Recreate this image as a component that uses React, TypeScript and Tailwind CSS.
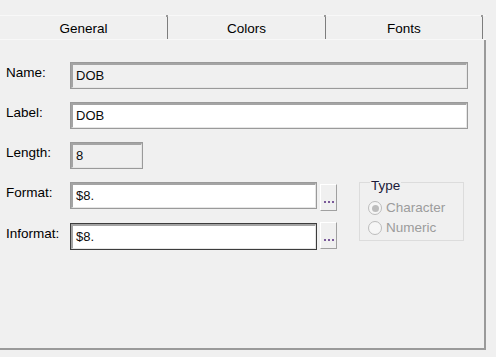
import type { ReactNode } from 'react';

const font = { fontFamily: '"Liberation Sans", Arial, sans-serif' };

function Field({ value, width, white, focused }: { value: string; width: string; white?: boolean; focused?: boolean }) {
  return (
    <div
      className={`${width} h-[27px] border ${focused ? 'border-[#3c3c3c]' : 'border-[#9a9a9a]'} ${white ? 'bg-white' : 'bg-[#f0f0f0]'}`}
    >
      <div className="flex h-full items-center border-t-2 border-l-2 border-r border-b border-t-[#a4a4a4] border-l-[#a4a4a4] border-r-[#e6e6e6] border-b-[#e6e6e6] pl-[3px] pb-[1px] text-[13px] text-[#0a0a0a]">
        {value}
      </div>
    </div>
  );
}

function DotsButton({ tall }: { tall?: boolean }) {
  return (
    <div
      className={`ml-[3px] ${tall ? 'mt-[2px]' : 'mt-[-1px]'} flex h-[27px] w-[17px] items-end justify-center gap-[2px] border border-t-white border-l-white border-r-[#a0a0a0] border-b-[#a0a0a0] bg-[#f0f0f0] pb-[7px]`}
    >
      <span className="h-[2px] w-[2px] bg-[#7a5a9a]" />
      <span className="h-[2px] w-[2px] bg-[#7a5a9a]" />
      <span className="h-[2px] w-[2px] bg-[#7a5a9a]" />
    </div>
  );
}

function Row({ label, children }: { label: string; children: ReactNode }) {
  return (
    <div className="flex items-start">
      <div className="w-[64px] pt-[3px] text-[13.5px] leading-[16px] text-black">{label}</div>
      {children}
    </div>
  );
}

function Radio({ label, checked }: { label: string; checked?: boolean }) {
  return (
    <div className="flex items-center gap-[4px]">
      <div className="flex h-[14px] w-[14px] items-center justify-center rounded-full border border-[#bcbcbc] bg-[#f6f6f6]">
        {checked ? <div className="h-[7px] w-[7px] rounded-full bg-[#bdbdbd]" /> : null}
      </div>
      <span className="text-[13.5px] leading-[16px] text-[#9c9c9c]">{label}</span>
    </div>
  );
}

function Tab({ label, width }: { label: string; width: string }) {
  return (
    <div className={`relative flex ${width} items-center justify-center border-r border-[#7d7d7d] pt-[3px]`}>
      {label}
      <span className="absolute right-[-1px] top-[-1px] h-[2px] w-[2px] bg-[#9a9a9a]" />
    </div>
  );
}

export default function App() {
  return (
    <div className="h-[357px] w-[496px] bg-[#f0f0f0] pt-[15px]" style={font}>
      <div className="flex h-[25px] w-[486px] border-t border-b border-[#f8f8f8] text-[13.5px] text-black">
        <Tab label="General" width="w-[168px]" />
        <Tab label="Colors" width="w-[158px]" />
        <Tab label="Fonts" width="w-[157px]" />
      </div>
      <div className="h-[310px] w-[486px] border-r-2 border-b-2 border-r-[#9a9a9a] border-b-[#9a9a9a] pl-[6px] pt-[22px]">
        <div className="flex flex-col gap-[13px]">
          <Row label="Name:">
            <Field value="DOB" width="w-[398px]" />
          </Row>
          <Row label="Label:">
            <Field value="DOB" width="w-[398px]" white />
          </Row>
          <Row label="Length:">
            <Field value="8" width="w-[73px]" />
          </Row>
          <div className="flex items-start">
            <div className="flex flex-col gap-[12px]">
              <Row label="Format:">
                <Field value="$8." width="w-[247px]" white />
                <DotsButton tall />
              </Row>
              <Row label="Informat:">
                <Field value="$8." width="w-[247px]" white focused />
                <DotsButton />
              </Row>
            </div>
            <div className="relative ml-[22px] h-[59px] w-[105px] border border-[#dcdcdc] pl-[8px] pt-[17px]">
              <span className="absolute left-[10px] top-[-5px] bg-[#f0f0f0] px-[1px] text-[13.5px] leading-[16px] text-[#1a1a3a]">
                Type
              </span>
              <div className="flex flex-col gap-[4px]">
                <Radio label="Character" checked />
                <Radio label="Numeric" />
              </div>
            </div>
          </div>
        </div>
      </div>
    </div>
  );
}
